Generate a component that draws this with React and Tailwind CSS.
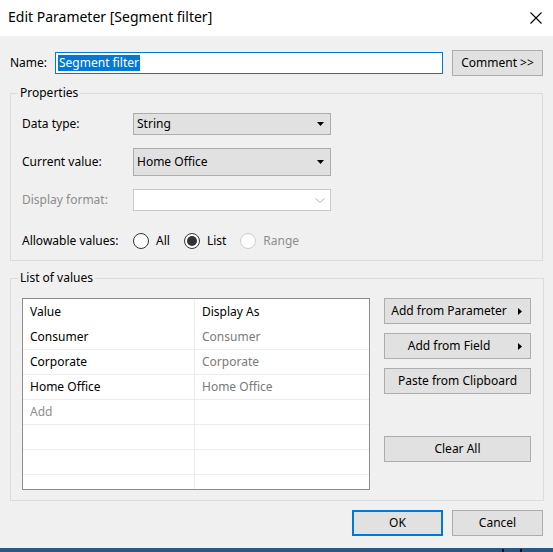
import React from "react";

function DropArrow() {
  return (
    <svg width="7" height="4" viewBox="0 0 7 4">
      <path d="M0 0 H7 L3.5 4 Z" fill="#000" />
    </svg>
  );
}

function RightArrow() {
  return (
    <svg width="4" height="7" viewBox="0 0 4 7">
      <path d="M0 0 L4 3.5 L0 7 Z" fill="#000" />
    </svg>
  );
}

function Radio({ checked, disabled, label }) {
  return (
    <div className="flex items-center">
      <span
        className={
          "w-[16px] h-[16px] rounded-full border bg-white flex items-center justify-center " +
          (disabled ? "border-[#cccccc]" : "border-[#333333]")
        }
      >
        {checked ? <span className="w-[10px] h-[10px] rounded-full bg-[#333333]" /> : null}
      </span>
      <span className={"ml-[7px] " + (disabled ? "text-[#8d8d8d]" : "text-black")}>{label}</span>
    </div>
  );
}

function Button({ children, className = "", arrow = false }) {
  return (
    <div
      className={
        "relative h-[26px] border border-[#adadad] bg-[#e1e1e1] flex items-center justify-center " +
        (arrow ? "pr-[17px] " : "") +
        className
      }
    >
      <span>{children}</span>
      {arrow ? (
        <span className="absolute right-[8px] top-[9px] flex">
          <RightArrow />
        </span>
      ) : null}
    </div>
  );
}

const rows = [
  { v: "Consumer", d: "Consumer" },
  { v: "Corporate", d: "Corporate" },
  { v: "Home Office", d: "Home Office" },
  { v: "Add", d: "", add: true },
  { v: "", d: "" },
  { v: "", d: "" },
  { v: "", d: "" },
];

export default function App() {
  return (
    <div className="w-[553px] h-[552px] bg-[#f0f0f0] flex flex-col overflow-hidden font-['Noto_Sans',sans-serif] text-[12px] text-black leading-[16px]">
      {/* Title bar */}
      <div className="h-[36px] bg-white flex items-center justify-between pl-[8px] pr-[11px] shrink-0">
        <span className="text-[14px] leading-[20px] pb-[2px]">Edit Parameter [Segment filter]</span>
        <svg width="12" height="12" viewBox="0 0 12 12" className="mb-[1px]">
          <path d="M0.5 0.5 L11.5 11.5 M11.5 0.5 L0.5 11.5" stroke="#000" strokeWidth="1.1" fill="none" />
        </svg>
      </div>

      {/* Body */}
      <div className="flex-1 flex flex-col px-[10px]">
        {/* Name row */}
        <div className="mt-[14px] h-[26px] flex items-center">
          <span className="w-[45px]">Name:</span>
          <div className="w-[388px] h-[22px] border border-[#0078d7] bg-white flex items-center pl-[2px]">
            <span className="bg-[#0078d7] text-white px-[1px] leading-[16px]">Segment filter</span>
          </div>
          <Button className="ml-[9px] w-[91px]">Comment &gt;&gt;</Button>
        </div>

        {/* Properties */}
        <fieldset className="mt-[9px] border border-[#dcdcdc] pl-[11px] pr-[11px] pt-[12px] pb-[10px]">
          <legend className="-ml-[4px] px-[2px] leading-[16px]">Properties</legend>
          <div className="flex flex-col">
            <div className="h-[22px] flex items-center">
              <span className="w-[111px]">Data type:</span>
              <div className="w-[198px] h-[22px] border border-[#adadad] bg-[#e1e1e1] flex items-center justify-between pl-[3px] pr-[6px]">
                <span>String</span>
                <DropArrow />
              </div>
            </div>
            <div className="mt-[13px] h-[28px] flex items-center">
              <span className="w-[111px]">Current value:</span>
              <div className="w-[198px] h-[28px] border border-[#adadad] bg-[#e1e1e1] flex items-center justify-between pl-[3px] pr-[6px]">
                <span>Home Office</span>
                <DropArrow />
              </div>
            </div>
            <div className="mt-[13px] h-[22px] flex items-center">
              <span className="w-[111px] text-[#8d8d8d]">Display format:</span>
              <div className="w-[198px] h-[22px] border border-[#cccccc] bg-white flex items-center justify-end pr-[5px]">
                <svg width="10" height="5" viewBox="0 0 10 5">
                  <path d="M0.5 0.5 L5 4.5 L9.5 0.5" stroke="#b4b4b4" strokeWidth="1" fill="none" />
                </svg>
              </div>
            </div>
            <div className="mt-[21px] h-[18px] flex items-center">
              <span className="w-[111px]">Allowable values:</span>
              <Radio label="All" />
              <div className="ml-[14px]">
                <Radio label="List" checked />
              </div>
              <div className="ml-[14px]">
                <Radio label="Range" disabled />
              </div>
            </div>
          </div>
        </fieldset>

        {/* List of values */}
        <fieldset className="mt-[9px] border border-[#dcdcdc] pl-[11px] pr-[12px] pt-[12px] pb-[10px]">
          <legend className="-ml-[4px] px-[2px] leading-[16px]">List of values</legend>
          <div className="flex">
            <div className="w-[348px] h-[192px] border border-[#8c8c8c] bg-white overflow-hidden flex flex-col">
              <div className="h-[26px] grid grid-cols-[172px_1fr] shrink-0">
                <div className="border-r border-[#ececec] flex items-center pl-[7px]">Value</div>
                <div className="flex items-center pl-[7px]">Display As</div>
              </div>
              {rows.map((r, i) => (
                <div key={i} className="h-[25px] grid grid-cols-[172px_1fr] border-b border-[#ececec] shrink-0">
                  <div className={"border-r border-[#ececec] flex items-center pl-[7px] " + (r.add ? "text-[#8d8d8d]" : "text-black")}>
                    {r.v}
                  </div>
                  <div className="flex items-center pl-[7px] text-[#7a7a7a]">{r.d}</div>
                </div>
              ))}
            </div>
            <div className="ml-[14px] w-[147px] flex flex-col">
              <Button arrow>Add from Parameter</Button>
              <Button arrow className="mt-[9px]">Add from Field</Button>
              <Button className="mt-[9px]">Paste from Clipboard</Button>
              <Button className="mt-[42px]">Clear All</Button>
            </div>
          </div>
        </fieldset>

        {/* OK / Cancel */}
        <div className="mt-[9px] flex justify-end">
          <div className="w-[91px] h-[26px] border-2 border-[#0078d7] bg-[#e1e1e1] flex items-center justify-center">OK</div>
          <Button className="ml-[9px] w-[91px]">Cancel</Button>
        </div>
      </div>

      {/* Taskbar strip */}
      <div className="h-[4px] bg-[#2b5784] shrink-0 relative">
        <span className="absolute left-[502px] top-[1px] w-[2px] h-[3px] bg-[#111]" />
        <span className="absolute left-[520px] top-[1px] w-[2px] h-[3px] bg-[#111]" />
      </div>
    </div>
  );
}
